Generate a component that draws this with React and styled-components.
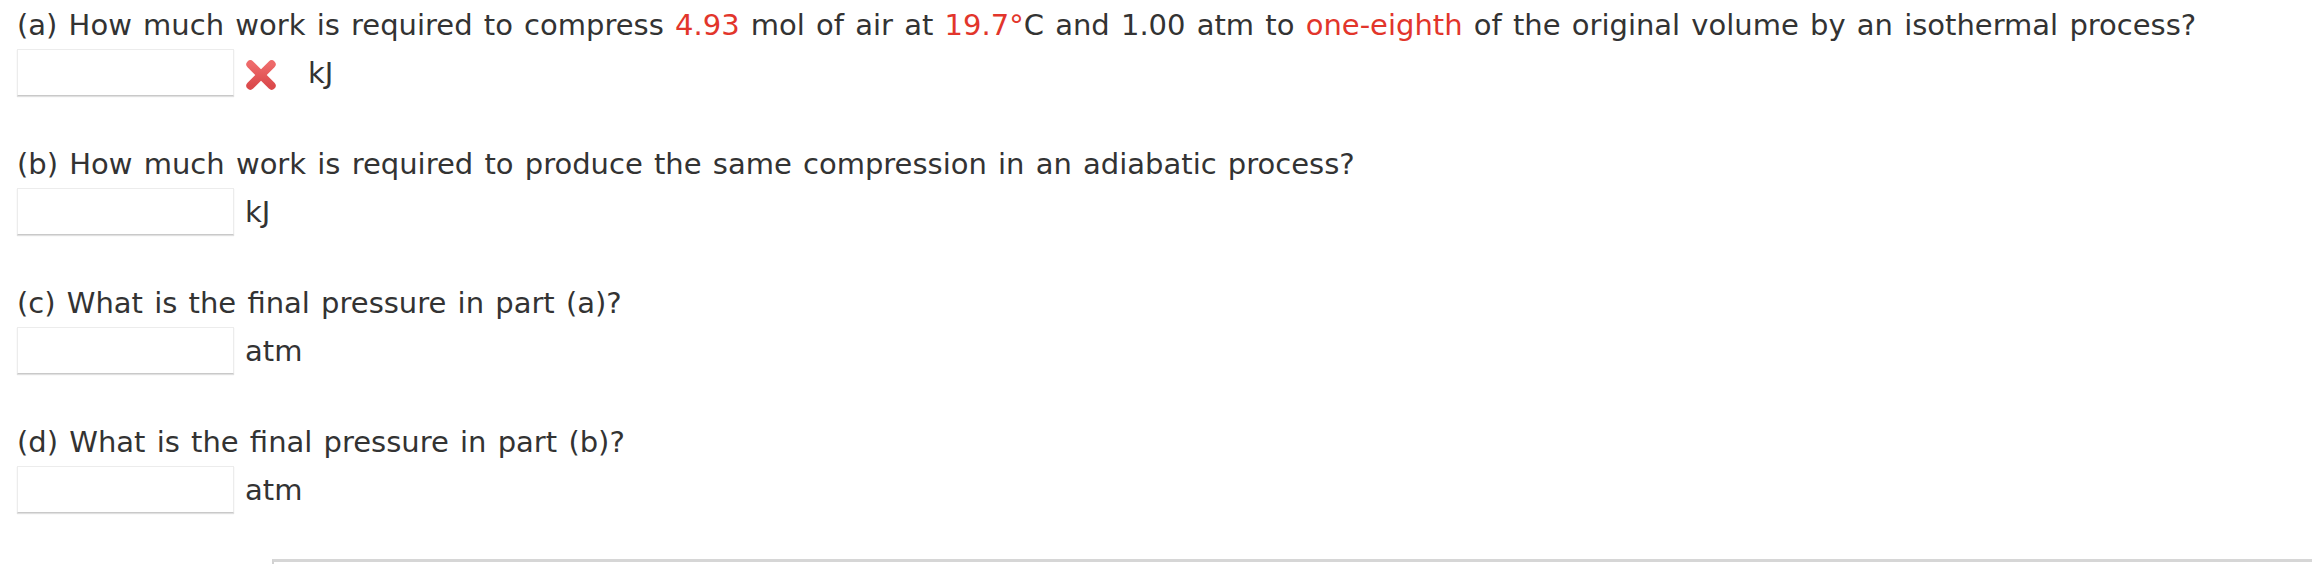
import React from "react";
import styled, { createGlobalStyle } from "styled-components";

const GlobalStyle = createGlobalStyle`
    html, body {
        margin: 0;
        padding: 0;
        background: #ffffff;
    }
    body {
        font-family: Verdana, "DejaVu Sans", sans-serif;
        color: #333333;
    }
`;

const questions = [
    {
        id: "a",
        parts: [
            { text: "(a) How much work is required to compress " },
            { text: "4.93", hot: true },
            { text: " mol of air at " },
            { text: "19.7°", hot: true },
            { text: "C and 1.00 atm to " },
            { text: "one-eighth", hot: true },
            { text: " of the original volume by an isothermal process?" },
        ],
        unit: "kJ",
        wrong: true,
    },
    {
        id: "b",
        parts: [{ text: "(b) How much work is required to produce the same compression in an adiabatic process?" }],
        unit: "kJ",
    },
    {
        id: "c",
        parts: [{ text: "(c) What is the final pressure in part (a)?" }],
        unit: "atm",
    },
    {
        id: "d",
        parts: [{ text: "(d) What is the final pressure in part (b)?" }],
        unit: "atm",
    },
];

const WrongMark = () => (
    <Mark viewBox="0 0 30 30" aria-hidden="true">
        <defs>
            <linearGradient id="xgrad" x1="0" y1="0" x2="0" y2="1">
                <stop offset="0" stopColor="#ee6a6a" />
                <stop offset="1" stopColor="#db4a4c" />
            </linearGradient>
        </defs>
        <g stroke="url(#xgrad)" strokeWidth="7.5" strokeLinecap="round">
            <line x1="5" y1="5" x2="25" y2="25" />
            <line x1="25" y1="5" x2="5" y2="25" />
        </g>
    </Mark>
);

const App = () => {
    return (
        <>
            <GlobalStyle />
            <Page>
                {questions.map((q, idx) => (
                    <Question key={q.id} $last={idx === questions.length - 1}>
                        <Prompt>
                            {q.parts.map((p, i) =>
                                p.hot ? <Given key={i}>{p.text}</Given> : <span key={i}>{p.text}</span>
                            )}
                        </Prompt>
                        <AnswerRow>
                            <AnswerInput type="text" />
                            {q.wrong && <WrongMark />}
                            <Unit>{q.unit}</Unit>
                        </AnswerRow>
                    </Question>
                ))}
                <NextPanel />
            </Page>
        </>
    );
};

const Page = styled.div`
    padding: 7px 0 0 17px;
    overflow: hidden;
    height: 564px;
    box-sizing: border-box;
`;

const Question = styled.div`
    display: flex;
    flex-direction: column;
    margin-bottom: ${({ $last }) => ($last ? "46px" : "50px")};
`;

const Prompt = styled.div`
    font-size: 29px;
    line-height: 36px;
    word-spacing: 2px;
    white-space: nowrap;
    margin-bottom: 6px;
`;

const Given = styled.span`
    color: #e2352b;
`;

const AnswerRow = styled.div`
    display: flex;
    align-items: center;
    height: 47px;
`;

const AnswerInput = styled.input`
    width: 217px;
    height: 47px;
    box-sizing: border-box;
    margin: 0;
    padding: 0 8px;
    background: #ffffff;
    border: 1px solid #ececec;
    border-bottom-color: #c9c9c9;
    box-shadow: 0 1px 1px rgba(0, 0, 0, 0.12);
    border-radius: 0;
    font-family: inherit;
    font-size: 24px;
    outline: none;
`;

const Mark = styled.svg`
    width: 32px;
    height: 32px;
    margin: 4px 20px 0 11px;
    flex-shrink: 0;
`;

const Unit = styled.span`
    margin-left: 11px;
    font-size: 29px;
    line-height: 36px;
`;

const NextPanel = styled.div`
    margin-left: 255px;
    height: 40px;
    border-top: 3px solid #d6d6d6;
    border-left: 2px solid #d2d2d2;
`;

export default App;
